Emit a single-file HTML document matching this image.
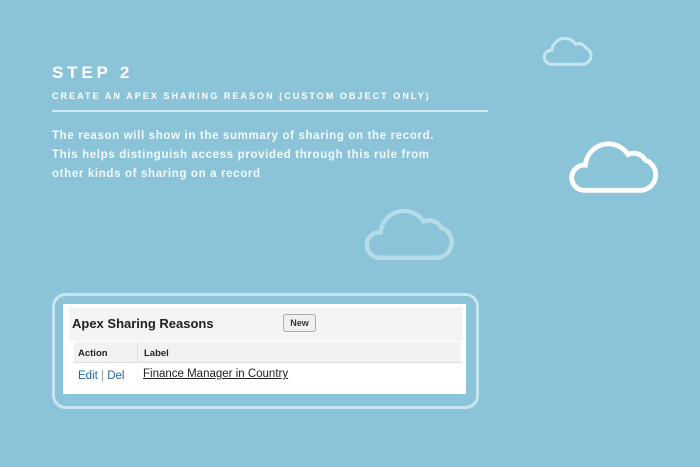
<!DOCTYPE html>
<html><head><style>
body{margin:0;width:700px;height:467px;background:#8bc4d9;position:relative;overflow:hidden;font-family:"Liberation Sans",sans-serif;color:#fff}
.a{position:absolute}
</style></head><body>
<svg class="a" style="left:0;top:0" width="700" height="467">
<defs><path id="c" d="M20,56 H80 A16,16 0 0 0 84,25 A14,14 0 0 0 66,19 A24,24 0 0 0 22,30 A13,13 0 0 0 20,56 Z"/></defs>
<g transform="translate(540,34) scale(0.54)" fill="none" stroke="#c9e6f0" stroke-width="5.5"><use href="#c"/></g>
<g transform="translate(359,203) scale(0.98)" fill="none" stroke="#b6dbe8" stroke-width="4.5"><use href="#c"/></g>
<g transform="translate(564,136) scale(0.97)" fill="none" stroke="#fff" stroke-width="5"><use href="#c"/></g>
<line x1="52" y1="111" x2="488" y2="111" stroke="#d6ecf4" stroke-width="2"/>
<rect x="53.5" y="294.5" width="424" height="113" rx="12" fill="none" stroke="#c7e5ef" stroke-width="3"/>
</svg>
<div class="a" style="left:52px;top:63px;font-size:17px;font-weight:bold;letter-spacing:3.8px">STEP 2</div>
<div class="a" style="left:52px;top:91px;font-size:9px;font-weight:bold;letter-spacing:2.05px">CREATE AN APEX SHARING REASON (CUSTOM OBJECT ONLY)</div>
<div class="a" style="left:52px;top:127px;font-size:11.5px;font-weight:bold;letter-spacing:0.65px;line-height:19px;color:#f4fafc">The reason will show in the summary of sharing on the record.<br>This helps distinguish access provided through this rule from<br>other kinds of sharing on a record</div>
<div class="a" style="left:63px;top:304px;width:403px;height:90px;background:#fff;color:#000">
 <div class="a" style="left:6px;top:3px;width:394px;height:34px;background:#f4f4f4"></div>
 <div class="a" style="left:9px;top:12px;font-size:13px;font-weight:bold;color:#222">Apex Sharing Reasons</div>
 <div class="a" style="left:220px;top:10px;width:31px;height:16px;border:1px solid #aaa;border-radius:3px;background:#f0f0f0;font-size:9px;font-weight:bold;text-align:center;line-height:16px;color:#333">New</div>
 <div class="a" style="left:11px;top:38px;width:387px;height:20px;background:#f2f2f2;border-bottom:1px solid #ddd"></div>
 <div class="a" style="left:74px;top:38px;width:1px;height:20px;background:#ddd"></div>
 <div class="a" style="left:15px;top:44px;font-size:9.5px;font-weight:bold;color:#222">Action</div>
 <div class="a" style="left:81px;top:44px;font-size:9.5px;font-weight:bold;color:#222">Label</div>
 <div class="a" style="left:15px;top:66px;font-size:11.5px;color:#1f66a7">Edit <span style="color:#999">|</span> Del</div>
 <div class="a" style="left:80px;top:64px;font-size:11.5px;color:#222;text-decoration:underline">Finance Manager in Country</div>
</div>
</body></html>
